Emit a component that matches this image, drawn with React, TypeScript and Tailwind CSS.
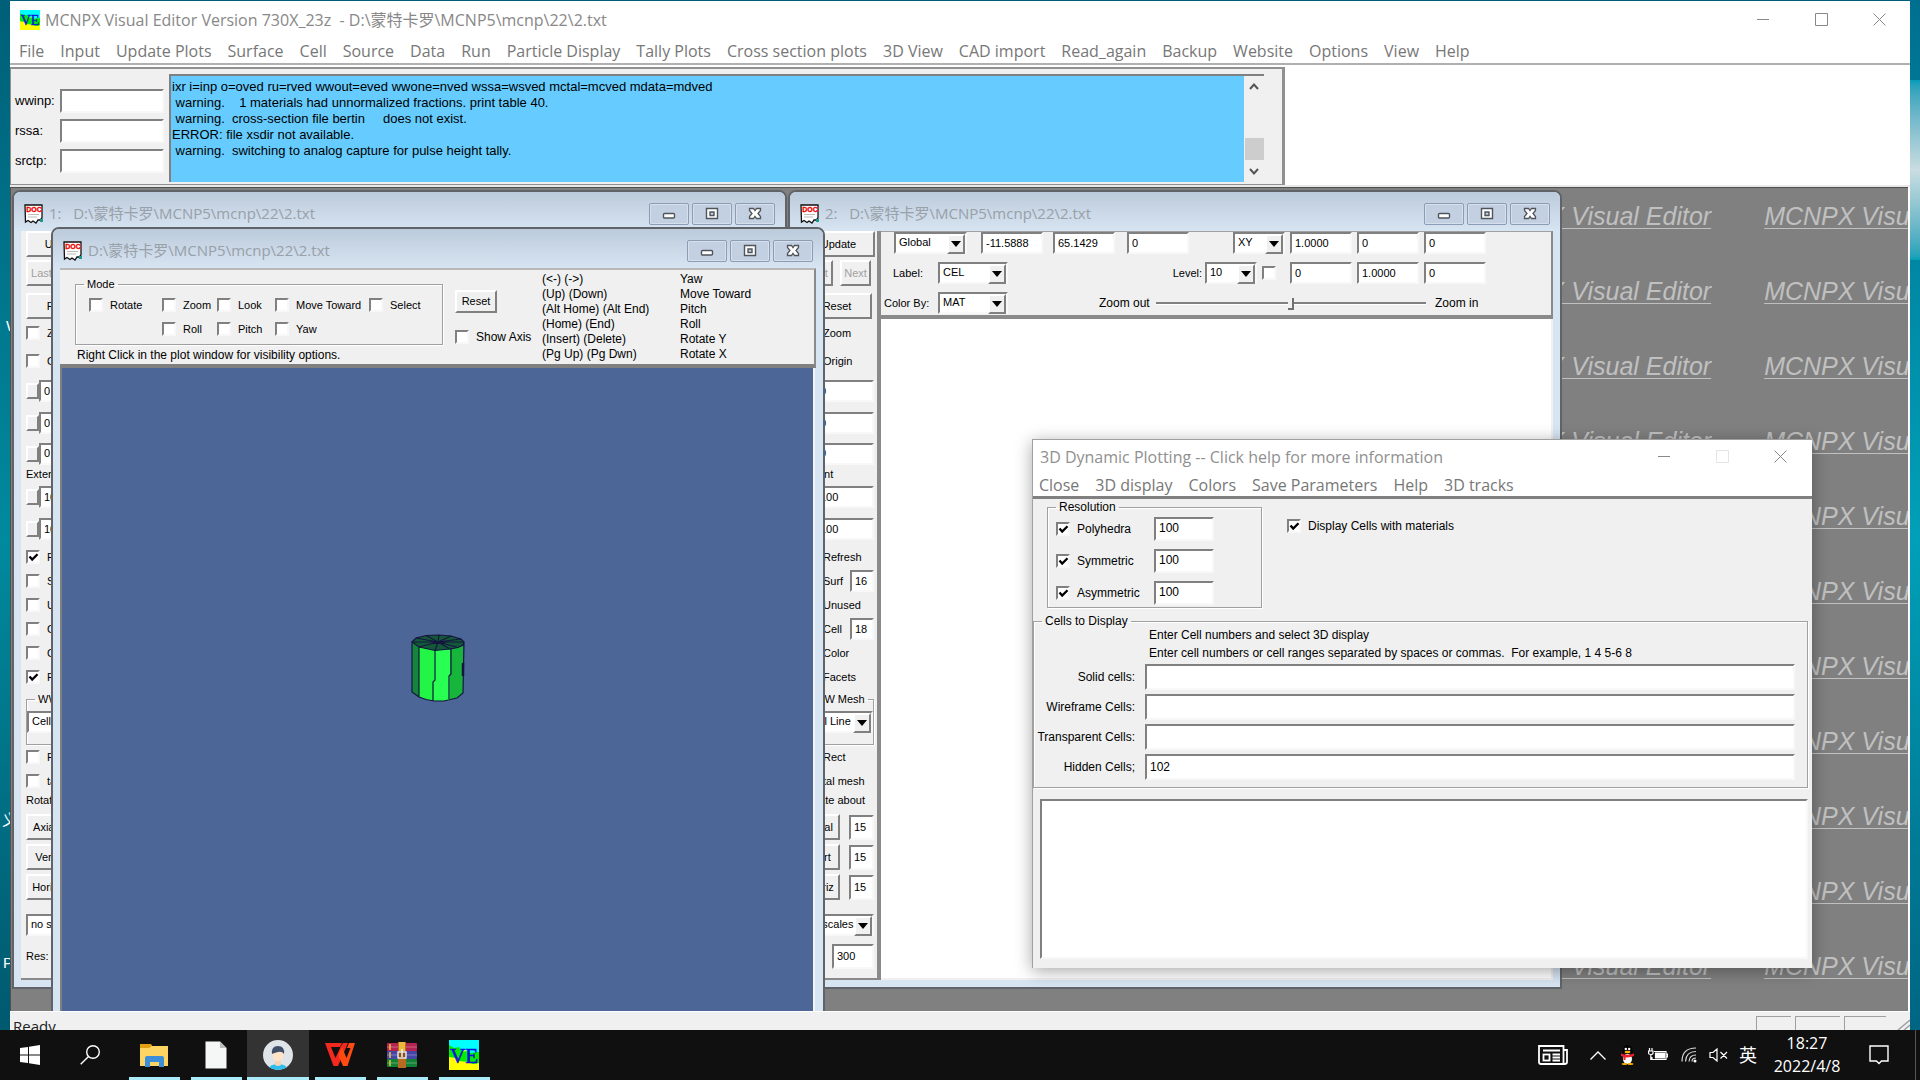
import type { ReactNode } from "react";

const sunken = "border-2 border-t-[#808080] border-l-[#808080] border-r-[#f8f8f8] border-b-[#f8f8f8] bg-white text-black outline-none";
const raised = "border-2 border-t-white border-l-white border-r-[#808080] border-b-[#808080] bg-[#f0f0f0]";
const titleFont = "font-['Open_Sans','Noto_Sans_CJK_SC',sans-serif]";

function TextInput({ label, value = "", height = "h-[22px]", className = "" }: { label: string; value?: string; height?: string; className?: string }) {
  return <input aria-label={label} defaultValue={value} className={`${sunken} ${height} min-w-0 px-[3px] pb-px ${className}`} />;
}

function Check({ label, checked = false, hideLabel = false, className = "" }: { label: string; checked?: boolean; hideLabel?: boolean; className?: string }) {
  return (
    <label className={`flex items-center gap-[7px] whitespace-nowrap ${className}`}>
      <span className="relative h-[14px] w-[14px] shrink-0">
        <input type="checkbox" defaultChecked={checked} aria-label={label} className={`${sunken} peer block h-[14px] w-[14px] appearance-none`} />
        <svg viewBox="0 0 14 14" className="pointer-events-none absolute inset-0 hidden h-[14px] w-[14px] peer-checked:block">
          <path d="M3.5 6.5 L6.2 9.6 L11.5 4.2" fill="none" stroke="#000" strokeWidth="2.3" />
        </svg>
      </span>
      {hideLabel ? null : label}
    </label>
  );
}

function Select({ label, value, className = "" }: { label: string; value: string; className?: string }) {
  return (
    <span className={`relative block h-[22px] ${className}`}>
      <select aria-label={label} defaultValue={value} className={`${sunken} block h-full w-full appearance-none pr-[18px] pb-1 pl-[3px]`}>
        <option>{value}</option>
      </select>
      <span className={`${raised} pointer-events-none absolute top-[2px] right-[2px] bottom-0 flex w-[18px] items-center justify-center`}>
        <svg viewBox="0 0 10 6" className="h-[6px] w-[10px]"><path d="M0 0H10L5 6Z" fill="#000" /></svg>
      </span>
    </span>
  );
}

function Group({ title, className = "", children }: { title: string; className?: string; children: ReactNode }) {
  return (
    <fieldset className={`min-w-0 border border-[#a0a0a0] shadow-[1px_1px_0_#fff,inset_1px_1px_0_#fff] ${className}`}>
      <legend className="ml-2 px-[3px] leading-[14px]">{title}</legend>
      {children}
    </fieldset>
  );
}

function VeIcon({ className }: { className: string }) {
  return (
    <svg viewBox="0 0 30 30" className={className} aria-hidden="true">
      <rect width="30" height="30" fill="#ffff00" />
      <path d="M0 0H30V17L22 16L17 10L12 12L0 6Z" fill="#00ffff" />
      <path d="M0 5L5 8L10 7L13 12L18 11L21 13L30 12V23L24 24L19 22L10 21L7 18L0 17Z" fill="#00ee00" />
      <text x="1" y="23" fontSize="21" fontFamily="Liberation Serif, serif" fill="#1010dd" stroke="#1010dd" strokeWidth="0.6">VE</text>
    </svg>
  );
}

function DocIcon() {
  return (
    <svg viewBox="0 0 20 20" className="h-5 w-5 shrink-0" aria-hidden="true">
      <path d="M1 1H18V14L16 16H14L12 19L9 17L7 18.5L4 16.5L1.5 18Z" fill="#fff" stroke="#111" strokeWidth="1.3" />
      <text x="2.2" y="7.6" fontSize="7" fontWeight="bold" fontFamily="Liberation Sans, sans-serif" fill="#e00" stroke="#e00" strokeWidth="0.3">DOC</text>
      <path d="M4 10.5H15M4 13H13" stroke="#bbb" />
      <path d="M16 15H19V18H16Z" fill="#1a9a8a" />
    </svg>
  );
}

function FrameButton({ label, children }: { label: string; children: ReactNode }) {
  return (
    <button type="button" aria-label={label} className="flex h-[22px] w-10 items-center justify-center rounded-[2px] border border-[#8b9cb4] bg-[#c2d0e1] shadow-[inset_0_0_0_1px_#d5e0ec]">
      <svg viewBox="0 0 14 14" className="h-[14px] w-[14px]">{children}</svg>
    </button>
  );
}

function ChildWindow({ title, className, children }: { title: string; className: string; children: ReactNode }) {
  return (
    <section className={`absolute flex flex-col rounded-t-lg border-2 border-[#606469] bg-[#d7e4f2] px-[7px] ${className}`}>
      <header className="-mx-[7px] flex h-[39px] shrink-0 items-center rounded-t-md bg-gradient-to-b from-[#bccbdb] to-[#d7e4f2] px-[10px] pt-1">
        <DocIcon />
        <h2 className={`${titleFont} ml-[5px] flex-1 text-[15px] whitespace-pre text-[#98a0a8]`}>{title}</h2>
        <div className="flex gap-[3px]">
          <FrameButton label="Minimize"><rect x="1.5" y="6.5" width="11" height="4.5" rx="1" fill="#fff" stroke="#50555c" strokeWidth="1.4" /></FrameButton>
          <FrameButton label="Maximize"><path d="M1.5 1.5H12.5V11.5H1.5ZM5 5V8.5H9V5Z" fill="#fff" fillRule="evenodd" stroke="#50555c" strokeWidth="1.4" /></FrameButton>
          <FrameButton label="Close"><path d="M1.5 1.5H5.5L7 3.700L8.500 1.500H12.500V3.500L10 6.500L12.500 9.500V11.500H8.500L7 9.300L5.500 11.500H1.500V9.500L4 6.500L1.500 3.500Z" fill="#fff" stroke="#50555c" strokeWidth="1.3" /></FrameButton>
        </div>
      </header>
      {children}
    </section>
  );
}

function SlideRow({ label, value, className }: { label: string; value: string; className: string }) {
  return (
    <div className={`flex items-center ${className}`}>
      <button type="button" aria-label={`Adjust ${label}`} className={`${raised} h-4 w-[13px]`} />
      <TextInput label={label} value={value} className="flex-1" />
    </div>
  );
}

function RotateRow({ name }: { name: string }) {
  return (
    <div className="flex h-[30px] items-center justify-between">
      <button type="button" className={`${raised} h-[26px] w-[38px]`}>{name}</button>
      <TextInput label={`${name} angle`} value="15" height="h-[25px]" className="w-[25px]" />
    </div>
  );
}

function PlotSidebar() {
  return (
    <aside className="flex w-[84px] shrink-0 flex-col border-r-4 border-b-2 border-[#8a8a8a] bg-[#f0f0f0] pl-[5px] text-[11px]">
      <button type="button" className={`${raised} h-[26px] w-[73px] border-r-[#606060] border-b-[#606060]`}>Update</button>
      <div className="mt-[3px] flex justify-between pr-[6px] text-[#a0a0a0]">
        <button type="button" disabled className={`${raised} h-[26px] w-[31px]`}>Last</button>
        <button type="button" disabled className={`${raised} h-[26px] w-[31px]`}>Next</button>
      </div>
      <button type="button" className={`${raised} mt-[7px] h-[26px] w-[70px]`}>Reset</button>
      <Check label="Zoom" className="h-7" />
      <Check label="Origin" className="h-7" />
      <div className="pr-[3px]">
        <SlideRow label="Origin X" value="0" className="h-8" />
        <SlideRow label="Origin Y" value="0" className="h-8" />
        <SlideRow label="Origin Z" value="0" className="h-[29px]" />
        <p className="leading-[13px]">Extent</p>
        <SlideRow label="Extent horizontal" value="100" className="h-8" />
        <SlideRow label="Extent vertical" value="100" className="h-8" />
        <Check label="Refresh" checked className="h-6" />
        <div className="flex h-6 items-center justify-between"><Check label="Surf" /><TextInput label="Surface size" value="16" className="w-6" /></div>
        <Check label="Unused" className="h-6" />
        <div className="flex h-6 items-center justify-between"><Check label="Cell" /><TextInput label="Cell size" value="18" className="w-6" /></div>
        <Check label="Color" className="h-6" />
        <Check label="Facets" checked className="h-6" />
        <Group title="WW Mesh" className="mt-[3px] h-[53px] whitespace-nowrap"><Select label="Weight window mesh" value="Cell Line" className="mt-[5px]" /></Group>
        <Check label="Rect" className="h-6" />
        <Check label="tal mesh" className="h-6" />
        <p className="h-[19px] leading-[14px]">Rotate about</p>
        <RotateRow name="Axial" />
        <RotateRow name="Vert" />
        <RotateRow name="Horiz" />
        <Select label="Scales" value="no scales" className="mt-3" />
        <label className="mt-2 flex items-center justify-between">Res:<TextInput label="Resolution" value="300" height="h-[25px]" className="w-[42px]" /></label>
      </div>
    </aside>
  );
}

function PlotControls() {
  return (
    <div className="flex h-[88px] shrink-0 flex-col gap-2 border-t border-r-2 border-b-4 border-t-[#a0a0a0] border-r-[#8a8a8a] border-b-[#8a8a8a] bg-[#f0f0f0] text-[11px]">
      <div className="flex pl-[13px]">
        <Select label="Universe" value="Global" className="w-[73px]" />
        <TextInput label="Origin X" value="-11.5888" className="ml-[14px] w-[62px]" />
        <TextInput label="Origin Y" value="65.1429" className="ml-[10px] w-[62px]" />
        <TextInput label="Origin Z" value="0" className="ml-3 w-[62px]" />
        <Select label="Plane" value="XY" className="ml-[44px] w-[52px]" />
        <TextInput label="Basis X1" value="1.0000" className="ml-[5px] w-[62px]" />
        <TextInput label="Basis X2" value="0" className="ml-[5px] w-[62px]" />
        <TextInput label="Basis X3" value="0" className="ml-[5px] w-[62px]" />
      </div>
      <div className="flex items-center">
        <span className="w-[57px] pl-3">Label:</span>
        <Select label="Label" value="CEL" className="w-[70px]" />
        <span className="w-[197px] pr-[3px] text-right">Level:</span>
        <Select label="Level" value="10" className="w-[52px]" />
        <Check label="Level lock" hideLabel className="ml-[5px]" />
        <TextInput label="Basis Y1" value="0" className="ml-[14px] w-[62px]" />
        <TextInput label="Basis Y2" value="1.0000" className="ml-[5px] w-[62px]" />
        <TextInput label="Basis Y3" value="0" className="ml-[5px] w-[62px]" />
      </div>
      <div className="flex items-center">
        <span className="w-[57px] pl-[3px]">Color By:</span>
        <Select label="Color by" value="MAT" className="w-[70px]" />
        <span className="ml-[91px] w-[57px] text-[12px]">Zoom out</span>
        <input
          type="range"
          aria-label="Zoom"
          defaultValue={50}
          className="h-4 w-[270px] appearance-none bg-transparent [&::-webkit-slider-runnable-track]:h-[3px] [&::-webkit-slider-runnable-track]:border-t-2 [&::-webkit-slider-runnable-track]:border-[#808080] [&::-webkit-slider-runnable-track]:bg-white [&::-webkit-slider-thumb]:-mt-[6px] [&::-webkit-slider-thumb]:h-3 [&::-webkit-slider-thumb]:w-[6px] [&::-webkit-slider-thumb]:appearance-none [&::-webkit-slider-thumb]:border-r-2 [&::-webkit-slider-thumb]:border-b-2 [&::-webkit-slider-thumb]:border-[#707070] [&::-webkit-slider-thumb]:bg-[#f0f0f0]"
        />
        <span className="ml-[9px] text-[12px]">Zoom in</span>
      </div>
    </div>
  );
}

function PlotWindow({ title, className }: { title: string; className: string }) {
  return (
    <ChildWindow title={title} className={className}>
      <div className="flex min-h-0 flex-1">
        <PlotSidebar />
        <div className="flex min-w-0 flex-1 flex-col">
          <PlotControls />
          <div className="flex-1 border-r-2 border-b-2 border-[#f0f0f0] bg-white" />
        </div>
      </div>
      <div className="h-[7px] shrink-0" />
    </ChildWindow>
  );
}

const keyHelp = [
  ["(<-) (->)", "Yaw"],
  ["(Up) (Down)", "Move Toward"],
  ["(Alt Home) (Alt End)", "Pitch"],
  ["(Home) (End)", "Roll"],
  ["(Insert) (Delete)", "Rotate Y"],
  ["(Pg Up) (Pg Dwn)", "Rotate X"],
];

function Cylinder() {
  return (
    <svg viewBox="0 0 54 68" className="h-[68px] w-[54px]" aria-hidden="true">
      <path d="M1 8L8 12V63L1 58Z" fill="#17843b" />
      <path d="M8 12L23 16V67L15 65.5L8 63Z" fill="#22f545" />
      <path d="M23 16L39 14V66L33 67H23Z" fill="#28ff52" />
      <path d="M39 14L52 10V59L46 64L39 66Z" fill="#18b53d" />
      <path d="M1 8L5 4L15 1.5L28 1L40 2L50 5L53 8L52 11L47 13.5L39 15L24 16.5L8 13Z" fill="#14583a" />
      <g fill="none" stroke="#14163f" strokeWidth="1.2">
        <path d="M1 8L5 4L15 1.5L28 1L40 2L50 5L53 8L52 11L47 13.5L39 15L24 16.5L8 13L1 8ZM1 8V58L8 63L15 65.5L23 67H33L46 64L52 59L53 8M8 13V63M24 16V46L22 48V67M40 14V40L38 42V65" />
        <path d="M27 8L1 8M27 8L5 4M27 8L15 1.5M27 8L28 1M27 8L40 2M27 8L50 5M27 8L53 8M27 8L47 13.5M27 8L39 15M27 8L24 16.5M27 8L8 13" />
        <path d="M52 29V42" strokeWidth="2.5" />
        <path d="M22 8.5H34" strokeWidth="3" />
      </g>
    </svg>
  );
}

function View3DWindow() {
  return (
    <ChildWindow title={"D:\\蒙特卡罗\\MCNP5\\mcnp\\22\\2.txt"} className="top-[39px] left-[40px] h-[830px] w-[774px]">
      <div className="flex h-[100px] shrink-0 gap-3 border-t-2 border-r-2 border-b-4 border-t-[#b8b8b8] border-r-[#8a8a8a] border-b-[#808080] bg-[#f0f0f0] pl-[15px] text-[12px]">
        <div className="w-[368px] pt-[7px]">
          <Group title="Mode" className="h-[68px] text-[11px]">
            <div className="mt-[6px] grid grid-cols-[73px_55px_58px_94px_1fr] gap-y-[7px] pl-[13px]">
              <Check label="Rotate" />
              <Check label="Zoom" />
              <Check label="Look" />
              <Check label="Move Toward" />
              <Check label="Select" />
              <Check label="Roll" className="col-start-2" />
              <Check label="Pitch" />
              <Check label="Yaw" />
            </div>
          </Group>
          <p className="mt-[3px] pl-[2px] leading-[14px] whitespace-nowrap">Right Click in the plot window for visibility options.</p>
        </div>
        <div className="w-[75px] pt-5">
          <button type="button" className={`${raised} h-[23px] w-[42px] text-[11px]`}>Reset</button>
          <Check label="Show Axis" className="mt-[15px]" />
        </div>
        <table className="mt-[2px] h-[90px] text-left leading-[15px] whitespace-nowrap">
          <tbody>
            {keyHelp.map(([keys, action]) => (
              <tr key={keys}><td className="w-[138px] p-0">{keys}</td><td className="p-0">{action}</td></tr>
            ))}
          </tbody>
        </table>
      </div>
      <div className="relative mr-px flex-1 border-x-2 border-l-[#808080] border-r-[#f4f4f4] bg-[#4c6697]">
        <div className="absolute top-[266px] left-[349px]"><Cylinder /></div>
      </div>
    </ChildWindow>
  );
}

function CaptionButtons({ dimMax = false, className = "" }: { dimMax?: boolean; className?: string }) {
  return (
    <div className={`flex ${className}`}>
      {[["Minimize", "M0 6.5H12"], ["Maximize", "M.5.5H12.5V12.5H.5Z"], ["Close", "M.5.5L12.5 12.5M12.5.5L.5 12.5"]].map(([label, d]) => (
        <button key={label} type="button" aria-label={label} className="flex w-[58px] items-center justify-center">
          <svg viewBox="0 0 13 13" className="h-[13px] w-[13px]"><path d={d} fill="none" stroke={dimMax && label === "Maximize" ? "#e4e4e4" : "#888"} /></svg>
        </button>
      ))}
    </div>
  );
}

function MenuBar({ items, className }: { items: string[]; className: string }) {
  return (
    <nav className={`flex gap-4 text-[16px] whitespace-nowrap text-[#777] ${titleFont} ${className}`}>
      {items.map((item) => <button key={item} type="button">{item}</button>)}
    </nav>
  );
}

const resolutions = ["Polyhedra", "Symmetric", "Asymmetric"];
const cellFields = [["Solid cells:", ""], ["Wireframe Cells:", ""], ["Transparent Cells:", ""], ["Hidden Cells;", "102"]];

function PlottingDialog() {
  return (
    <section className="absolute top-[439px] left-[1032px] flex h-[529px] w-[780px] flex-col border-l border-[#a0a0a0] bg-[#f0f0f0] text-[12px] shadow-[0_3px_16px_rgba(0,0,0,0.35)]">
      <header className="flex h-[34px] shrink-0 border-t border-[#a0a0a0] bg-white pl-[7px]">
        <h2 className={`${titleFont} flex-1 self-center text-[16px] text-[#909090]`}>3D Dynamic Plotting -- Click help for more information</h2>
        <CaptionButtons dimMax className="mr-[3px]" />
      </header>
      <MenuBar items={["Close", "3D display", "Colors", "Save Parameters", "Help", "3D tracks"]} className="h-[26px] shrink-0 border-b-[3px] border-[#808080] bg-white pb-[2px] pl-[6px]" />
      <div className="flex h-[112px] pt-px pl-[14px]">
        <Group title="Resolution" className="h-[108px] w-[215px]">
          <div className="mt-[3px] flex flex-col gap-[9px] pl-2">
            {resolutions.map((name) => (
              <div key={name} className="flex h-[23px] items-center">
                <Check label={name} checked className="w-[98px]" />
                <TextInput label={`${name} resolution`} value="100" height="h-[24px]" className="w-[60px]" />
              </div>
            ))}
          </div>
        </Group>
        <Check label="Display Cells with materials" checked className="mt-[19px] ml-[25px] h-[14px]" />
      </div>
      <Group title="Cells to Display" className="mt-[3px] mr-1 h-[174px] shrink-0">
        <p className="pl-[115px] leading-[14px]">Enter Cell numbers and select 3D display</p>
        <p className="mt-1 pl-[115px] leading-[14px] whitespace-pre">Enter cell numbers or cell ranges separated by spaces or commas.  For example, 1 4 5-6 8</p>
        <div className="mt-[2px]">
          {cellFields.map(([name, value]) => (
            <label key={name} className="flex h-[30px] items-center pr-3">
              <span className="w-[111px] shrink-0 pr-[10px] text-right whitespace-nowrap">{name}</span>
              <TextInput label={name} value={value} height="h-[26px]" className="flex-1" />
            </label>
          ))}
        </div>
      </Group>
      <textarea aria-label="Messages" className={`${sunken} mt-[11px] mr-1 mb-[9px] ml-[7px] min-h-0 flex-1 resize-none`} />
    </section>
  );
}

const mainMenu = ["File", "Input", "Update Plots", "Surface", "Cell", "Source", "Data", "Run", "Particle Display", "Tally Plots", "Cross section plots", "3D View", "CAD import", "Read_again", "Backup", "Website", "Options", "View", "Help"];

const consoleText = `ixr i=inp o=oved ru=rved wwout=eved wwone=nved wssa=wsved mctal=mcved mdata=mdved
 warning.    1 materials had unnormalized fractions. print table 40.
 warning.  cross-section file bertin     does not exist.
ERROR: file xsdir not available.
 warning.  switching to analog capture for pulse height tally.`;

function MainToolbar() {
  return (
    <div className="flex h-[122px] shrink-0 border-b-2 border-[#e8e8e8] bg-white pt-[2px]">
      <div className="flex w-[1275px] border-t-2 border-r-[3px] border-b border-l border-[#909090] bg-[#f0f0f0] text-[13px]">
        <div className="flex w-[158px] flex-col gap-[6px] pt-5 pr-[5px] pl-1">
          {["wwinp:", "rssa:", "srctp:"].map((name) => (
            <label key={name} className="flex items-center justify-between">{name}<TextInput label={name} height="h-6" className="w-[104px]" /></label>
          ))}
        </div>
        <div className="mt-[5px] mr-[18px] flex h-[108px] flex-1 border-t-2 border-l-2 border-[#808080]">
          <textarea readOnly aria-label="Messages" defaultValue={consoleText} className="h-full flex-1 resize-none overflow-hidden bg-[#66ccff] px-px pt-[3px] leading-4 whitespace-pre text-black outline-none" />
          <div className="flex w-5 flex-col items-center bg-[#f0f0f0] py-[7px]">
            <svg viewBox="0 0 10 7" className="h-[7px] w-[10px]"><path d="M1 6L5 1.5L9 6" fill="none" stroke="#555" strokeWidth="2" /></svg>
            <div className="mt-12 h-[22px] w-[19px] bg-[#cdcdcd]" />
            <svg viewBox="0 0 10 7" className="mt-auto h-[7px] w-[10px]"><path d="M1 1L5 5.5L9 1" fill="none" stroke="#555" strokeWidth="2" /></svg>
          </div>
        </div>
      </div>
    </div>
  );
}

function Wallpaper() {
  return (
    <div className="ml-auto w-[434px] overflow-hidden pt-[13px] font-['Liberation_Sans',sans-serif] text-[25px] text-[#c0c0c0] italic">
      {Array.from({ length: 11 }, (_, row) => (
        <div key={row} className="flex h-[75px] gap-[53px] leading-[30px] whitespace-nowrap underline decoration-1 underline-offset-[3px]">
          <span>MCNPX Visual Editor</span>
          <span>MCNPX Visual Editor</span>
        </div>
      ))}
    </div>
  );
}

function MainWindow() {
  return (
    <main className="relative mx-[10px] mt-px flex min-h-0 flex-1 flex-col bg-white">
      <header className="flex h-[37px] shrink-0 items-center pl-[10px]">
        <VeIcon className="h-5 w-5" />
        <h1 className={`${titleFont} ml-[5px] flex-1 text-[16px] whitespace-pre text-[#888]`}>{"MCNPX Visual Editor Version 730X_23z  - D:\\蒙特卡罗\\MCNP5\\mcnp\\22\\2.txt"}</h1>
        <CaptionButtons className="mr-[2px]" />
      </header>
      <MenuBar items={mainMenu} className="h-[27px] shrink-0 border-b-2 border-[#b0b0b0] pl-[9px]" />
      <MainToolbar />
      <div className="relative mr-[2px] min-h-0 flex-1 overflow-hidden border-t border-l border-[#505050] bg-[#808080]">
        <Wallpaper />
        <PlotWindow title={"1:   D:\\蒙特卡罗\\MCNP5\\mcnp\\22\\2.txt"} className="top-[2px] left-px h-[799px] w-[775px]" />
        <PlotWindow title={"2:   D:\\蒙特卡罗\\MCNP5\\mcnp\\22\\2.txt"} className="top-[2px] left-[777px] h-[799px] w-[774px]" />
        <View3DWindow />
      </div>
      <footer className={`${titleFont} flex h-[19px] shrink-0 justify-between overflow-hidden border-t border-white bg-[#f0f0f0] pl-[3px] text-[15px] leading-7 text-[#222]`}>
        Ready
        <div className="mt-1 flex gap-1">
          <span className="h-5 w-[35px] border-t border-l border-[#a0a0a0]" />
          <span className="h-5 w-[45px] border-t border-l border-[#a0a0a0]" />
          <span className="h-5 w-[42px] border-t border-l border-[#a0a0a0]" />
          <svg viewBox="0 0 20 14" className="h-[14px] w-5"><path d="M8 14L20 4M14 14L20 9" stroke="#a0a0a0" strokeWidth="1.5" /></svg>
        </div>
      </footer>
    </main>
  );
}

function TaskButton({ label, active = false, running = true, children }: { label: string; active?: boolean; running?: boolean; children: ReactNode }) {
  return (
    <button type="button" aria-label={label} className={`flex flex-col items-center ${running ? "w-[62px]" : "w-[60px]"} ${active ? "bg-[#333]" : ""}`}>
      <span className="flex flex-1 items-center justify-center pt-[2px]">{children}</span>
      {active ? <span className="h-[3px] w-full bg-[#a9ebf8]" /> : <span className={`h-[3px] w-[51px] ${running ? "bg-[#a9ebf8]" : ""}`} />}
    </button>
  );
}

function Taskbar() {
  return (
    <footer className="relative flex h-[50px] shrink-0 bg-[#101010] font-['Open_Sans','Noto_Sans_CJK_SC',sans-serif] text-white">
      <TaskButton label="Start" running={false}>
        <svg viewBox="0 0 20 20" className="h-5 w-5"><path d="M0 3L8 1.9V9.5H0ZM9 1.7L20 0V9.5H9ZM0 10.5H8V18.1L0 17ZM9 10.5H20V20L9 18.3Z" fill="#fff" /></svg>
      </TaskButton>
      <TaskButton label="Search" running={false}>
        <svg viewBox="0 0 20 20" className="h-5 w-5" fill="none" stroke="#fff" strokeWidth="1.4"><circle cx="13" cy="7" r="6.3" /><path d="M8.5 11.5L.7 19.3" /></svg>
      </TaskButton>
      <span className="w-[3px]" />
      <TaskButton label="File Explorer">
        <svg viewBox="0 0 28 24" className="h-6 w-7"><path d="M0 1H11L13 4H27V8H0Z" fill="#e0a011" /><path d="M0 5H9L12 3H28V23H0Z" fill="#fcd462" /><path d="M5 24V15Q5 13 7 13H22Q24 13 24 15V24H19V19H10V24Z" fill="#3a8fd8" /></svg>
      </TaskButton>
      <TaskButton label="Document">
        <svg viewBox="0 0 22 28" className="h-7 w-[22px]"><path d="M.5.5H15L21.5 7V27.5H.5Z" fill="#f5f7f7" /><path d="M15 .5V7H21.5Z" fill="#b8bcbd" /></svg>
      </TaskButton>
      <TaskButton label="Profile" active>
        <svg viewBox="0 0 30 30" className="h-[30px] w-[30px]"><defs><clipPath id="avatar"><circle cx="15" cy="15" r="15" /></clipPath></defs><g clipPath="url(#avatar)"><rect width="30" height="30" fill="#dfe4e8" /><path d="M5 30Q6 24 15 24T25 30Z" fill="#2fbdf0" /><path d="M12 18H18V25Q15 27 12 25Z" fill="#f5d2b3" /><ellipse cx="15" cy="15" rx="5.5" ry="6.5" fill="#ffe3c8" /><path d="M9 14Q8 6 15 6T21 14Q19 11 15 12T9 14Z" fill="#414e68" /></g></svg>
      </TaskButton>
      <TaskButton label="WPS Office">
        <svg viewBox="0 0 30 23" className="h-[23px] w-[30px]"><path d="M0 0H17L15 4H6L10.500 15L16 3L18 0H23L13 23H8.500Z" fill="#f1291f" /><path d="M13.500 12L17 4L21.500 15L25.500 5H22L24 0H30L22.500 23H18L14.500 15Z" fill="#ff4a12" /></svg>
      </TaskButton>
      <TaskButton label="WinRAR">
        <svg viewBox="0 0 30 26" className="h-[26px] w-[30px]"><rect width="30" height="8" rx="1" y="1" fill="#b52450" /><rect y="9" width="30" height="8" rx="1" fill="#4646a8" /><rect y="17" width="30" height="8" rx="1" fill="#128035" /><path d="M0 5H30M0 13H30M0 21H30" stroke="#fff" strokeOpacity=".3" /><path d="M3 2V8M3 10V16M3 18V24" stroke="#f0c63a" strokeWidth="1.5" /><rect x="11" width="8" height="26" fill="#b86a20" /><rect x="12" width="6" height="9" fill="#e9b93b" /><rect x="11" y="10" width="8" height="6" fill="#88521d" stroke="#eee" strokeWidth="1.4" /><path d="M15 7V15" stroke="#eee" strokeWidth="1.5" /></svg>
      </TaskButton>
      <TaskButton label="Visual Editor"><VeIcon className="h-[30px] w-[30px]" /></TaskButton>
      <div className="ml-auto flex items-center">
        <svg viewBox="0 0 30 20" className="mr-[22px] h-5 w-[30px]" fill="none" stroke="#fff" strokeWidth="1.8"><path d="M1 1H25.5V19H3Q1 19 1 17ZM26 5H29V17Q29 19 26.5 19H25M5 5.5H22M14.5 9.5H22M14.5 12.5H22M14.5 15.5H22" /><rect x="5.5" y="9.5" width="6" height="6" /></svg>
        <svg viewBox="0 0 16 9" className="mr-[14px] h-[9px] w-4"><path d="M.5 8.5L8 1L15.5 8.5" fill="none" stroke="#fff" strokeWidth="1.3" /></svg>
        <svg viewBox="0 0 15 20" className="mr-[13px] h-5 w-[15px]"><ellipse cx="7.5" cy="6" rx="5" ry="6" fill="#000" /><ellipse cx="7.5" cy="13" rx="6" ry="6.5" fill="#111" /><ellipse cx="7.5" cy="14" rx="4.5" ry="5" fill="#fff" /><circle cx="5.8" cy="4" r="1.2" fill="#fff" /><circle cx="9.2" cy="4" r="1.2" fill="#fff" /><ellipse cx="7.5" cy="7" rx="3" ry="1.2" fill="#ffb300" /><path d="M1 8.5Q7.5 11 14 8.5V11Q7.5 13 5.5 12.5V15H3.5V11.8L1 11Z" fill="#e9202b" /><ellipse cx="4.5" cy="19" rx="3" ry="1" fill="#ffb300" /><ellipse cx="10.5" cy="19" rx="3" ry="1" fill="#ffb300" /></svg>
        <svg viewBox="0 0 20 14" className="mr-[13px] h-[14px] w-5" fill="none" stroke="#fff" strokeWidth="1.2"><path d="M6 3.5H18V11.5H4V9M18 6H19.5V9H18M1.5 0V3M4 0V3M.6 3H5V5Q5 6.5 2.8 6.5T.6 5ZM2.8 6.5V12" /><path d="M7.5 5H16.5V10H7.5Z" fill="#fff" /></svg>
        <svg viewBox="0 0 16 16" className="mr-3 h-4 w-4" fill="none" stroke="#ddd" strokeWidth="1.2"><path d="M1 14.5Q1 1 15 1M4.5 14.5Q5 4.5 15 4.5M8 14.5Q8.5 8 15 8M11 14.5Q11 11 15 11" /><circle cx="14" cy="14" r="1.5" fill="#fff" stroke="none" /></svg>
        <svg viewBox="0 0 19 14" className="mr-[11px] h-[14px] w-[19px]" fill="none" stroke="#fff" strokeWidth="1.2"><path d="M1 4.5H4L8 1V13L4 9.5H1ZM11.5 4L18 10.5M18 4L11.5 10.5" /></svg>
        <span className="w-[18px] text-[18px] leading-6">英</span>
        <time className="ml-[15px] w-[70px] text-center text-[16px] leading-[23px]">18:27<br />2022/4/8</time>
        <svg viewBox="0 0 20 20" className="mr-[31px] ml-[27px] h-5 w-5"><path d="M1 1H19V16H12.5L10 18.5L7.5 16H1Z" fill="none" stroke="#fff" strokeWidth="1.4" /></svg>
      </div>
      <span className="absolute top-0 right-1 h-full w-px bg-[#555]" />
    </footer>
  );
}

export default function App() {
  return (
    <div className="relative flex h-screen flex-col overflow-hidden bg-gradient-to-b from-[#005f78] via-[#008a9e] to-[#00546a] font-['Liberation_Sans',sans-serif] text-black">
      <div className="absolute top-0 right-0 h-full w-[10px] bg-gradient-to-b from-[#006f8f] via-[#00a0b8] to-[#005f7d]" />
      <div className="absolute top-[80px] right-0 h-[180px] w-[10px] bg-gradient-to-b from-[#009db8] via-[#c9dde2] to-[#00a0b8]" />
      <span className="absolute top-[807px] left-[2px] font-['Noto_Sans_CJK_SC',sans-serif] text-[16px] text-white">义</span>
      <span className="absolute top-[952px] left-[3px] text-[15px] text-white">P</span>
      <span className="absolute top-[315px] left-[6px] text-[15px] text-white">W</span>
      <MainWindow />
      <PlottingDialog />
      <Taskbar />
    </div>
  );
}
